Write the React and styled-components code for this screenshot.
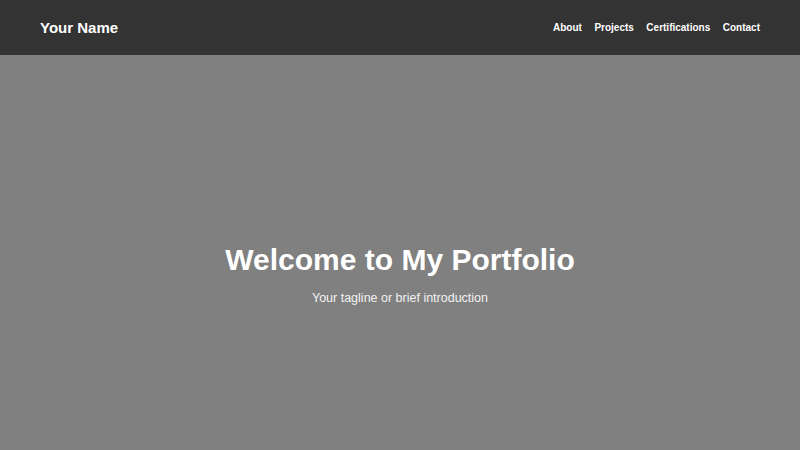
import styled, { createGlobalStyle } from 'styled-components'

const GlobalStyle = createGlobalStyle`
    html, body {
        margin: 0;
        padding: 0;
        font-family: "Liberation Sans", Arial, sans-serif;
        background: #808080;
    }
    * {
        box-sizing: border-box;
    }
`
const Header = styled.header`
    display: flex;
    align-items: center;
    justify-content: space-between;
    height: 55px;
    padding: 0 40px;
    background: #333333;
    color: #ffffff;
`
const Logo = styled.div`
    font-size: 15px;
    font-weight: bold;
`
const Nav = styled.nav`
    display: flex;
    gap: 12.5px;
`
const NavLink = styled.a`
    color: #ffffff;
    font-size: 10px;
    font-weight: bold;
    text-decoration: none;
`
const Hero = styled.section`
    display: flex;
    flex-direction: column;
    align-items: center;
    justify-content: center;
    height: 395px;
    padding-top: 42px;
    background: #808080;
    color: #ffffff;
    text-align: center;
`
const Title = styled.h1`
    margin: 0 0 14px;
    font-size: 30px;
    font-weight: bold;
`
const Tagline = styled.p`
    margin: 0;
    font-size: 12.5px;
    color: #f2f2f2;
`

const links = ['About', 'Projects', 'Certifications', 'Contact']

export default function App() {
    return (
        <>
            <GlobalStyle />
            <Header>
                <Logo>Your Name</Logo>
                <Nav>
                    {links.map(l => (
                        <NavLink key={l} href={'#' + l.toLowerCase()}>{l}</NavLink>
                    ))}
                </Nav>
            </Header>
            <Hero>
                <Title>Welcome to My Portfolio</Title>
                <Tagline>Your tagline or brief introduction</Tagline>
            </Hero>
        </>
    )
}
